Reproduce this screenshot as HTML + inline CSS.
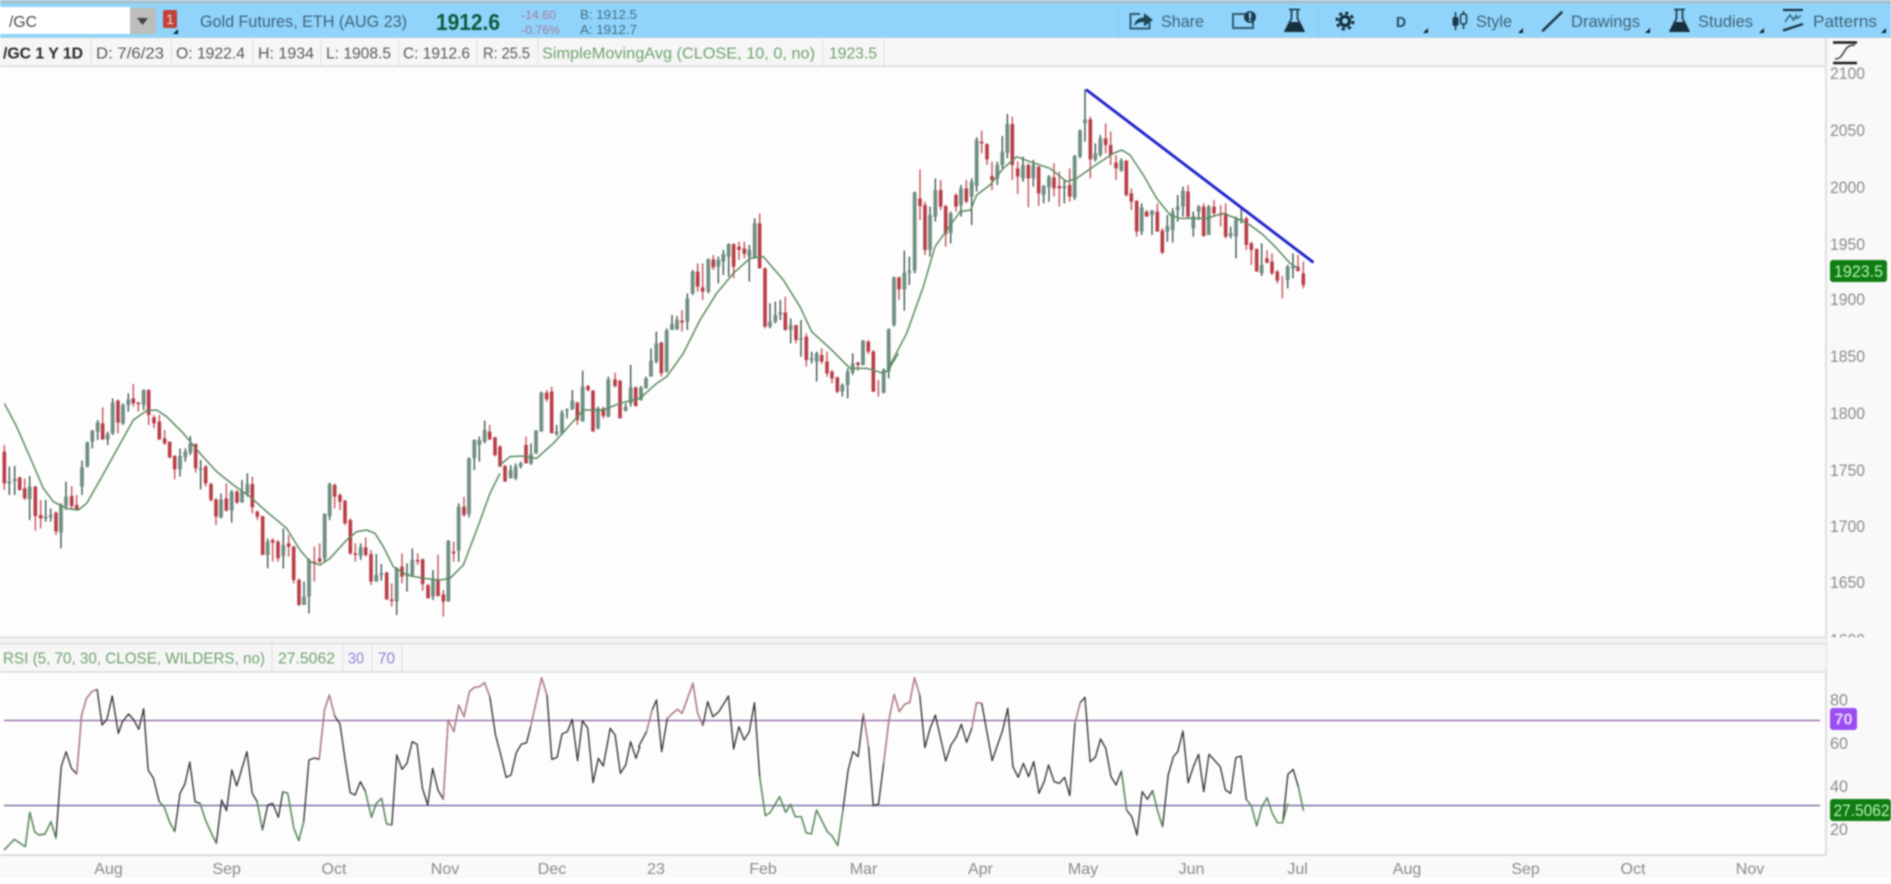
<!DOCTYPE html>
<html><head><meta charset="utf-8"><title>Gold Futures chart</title>
<style>
html,body{margin:0;padding:0;background:#fff;width:1891px;height:884px;overflow:hidden}
svg{display:block;filter:blur(.7px)}
svg *{vector-effect:non-scaling-stroke}
text{font-family:"Liberation Sans",sans-serif}
.rw{stroke:#c2464f;stroke-width:1.3;fill:none}
.rb{stroke:#b93c46;stroke-width:3.6;fill:none}
.gw{stroke:#2f4c44;stroke-width:1.3;fill:none}
.gb{stroke:#6f8f82;stroke-width:3.8;fill:none}
.ax{font-size:17px;fill:#8c8c8c}
.dt{font-size:16px;fill:#8a8a8a;text-anchor:middle}
.tb{font-size:17px;fill:#3f6478}
.r2{font-size:16px;fill:#5a5a5a}
.gt{font-size:16px;fill:#6fa36f}
.ln{fill:none;stroke:#3a3a3a;stroke-width:1.4;stroke-linejoin:round}
.lr{fill:none;stroke:#b97f86;stroke-width:1.4;stroke-linejoin:round}
.lg{fill:none;stroke:#5d915d;stroke-width:1.4;stroke-linejoin:round}
.sma{fill:none;stroke:#5a8a5e;stroke-width:1.5;stroke-linejoin:round}
</style></head><body>
<svg width="1891" height="884" viewBox="0 0 1891 884" xmlns="http://www.w3.org/2000/svg">
<rect width="1891" height="884" fill="#fff"/>
<!-- toolbar -->
<rect y="3" width="1891" height="35" fill="#90d4fb"/>
<rect width="1891" height="4" fill="#a2c3d4"/>
<rect y="7" width="130" height="27" fill="#fff"/>
<text x="9" y="27" font-size="16" fill="#4a4a4a" textLength="28" lengthAdjust="spacingAndGlyphs">/GC</text>
<rect x="130" y="8" width="26" height="26" fill="#bdbdbd"/>
<path d="M137 18h11l-5.500 7z" fill="#444"/>
<rect x="163" y="10" width="14" height="18" rx="2" fill="#c4403a"/>
<text x="170" y="24" font-size="14" fill="#f5d5d0" text-anchor="middle">1</text>
<path d="M178 29v5h-5z" fill="#123"/>
<text x="200" y="27" class="tb" textLength="207" lengthAdjust="spacingAndGlyphs">Gold Futures, ETH (AUG 23)</text>
<text x="436" y="30" font-size="23" font-weight="bold" fill="#0f5a40" textLength="64" lengthAdjust="spacingAndGlyphs">1912.6</text>
<text x="521" y="19" font-size="12" fill="#a9789e" textLength="35" lengthAdjust="spacingAndGlyphs">-14.60</text>
<text x="521" y="34" font-size="12" fill="#a9789e" textLength="39" lengthAdjust="spacingAndGlyphs">-0.76%</text>
<text x="580" y="19" font-size="13" fill="#456f85" textLength="57" lengthAdjust="spacingAndGlyphs">B: 1912.5</text>
<text x="580" y="34" font-size="13" fill="#456f85" textLength="57" lengthAdjust="spacingAndGlyphs">A: 1912.7</text>
<path d="M1118 5V37M1342 5V37M1318 5V37" stroke="#84c7ec" stroke-width="1"/>
<!-- share -->
<path d="M1140 14h-9.500v14.500h19v-6" fill="none" stroke="#2d5a70" stroke-width="2"/>
<path d="M1134 26c1-6 5-8.500 10-8.500V13l9 7-9 6.500v-4.500c-4 0-7 1-10 4z" fill="#1f4558"/>
<text x="1161" y="27" class="tb" textLength="43" lengthAdjust="spacingAndGlyphs">Share</text>
<!-- calendar -->
<path d="M1245 14h-12v14h20v-8" fill="none" stroke="#2d5a70" stroke-width="2"/>
<circle cx="1250" cy="17" r="6" fill="#1d3d4e"/>
<rect x="1249" y="12.500" width="2" height="6" fill="#90d4fb"/><rect x="1249" y="19.500" width="2" height="1.800" fill="#90d4fb"/>
<!-- flask -->
<path d="M1289 9.500h11M1291.500 9.500v9l-6 12h18l-6-12v-9" fill="none" stroke="#24404f" stroke-width="1.800"/>
<path d="M1289.500 22h10l5.500 10h-21z" fill="#172f3c"/>
<!-- gear -->
<circle cx="1345" cy="21" r="4.500" fill="none" stroke="#14303e" stroke-width="3.200"/>
<circle cx="1345" cy="21" r="8" fill="none" stroke="#14303e" stroke-width="3" stroke-dasharray="3.140 3.140"/>
<text x="1396" y="27" font-size="15" font-weight="bold" fill="#244c60" textLength="10" lengthAdjust="spacingAndGlyphs">D</text>
<path d="M1428 28v5h-5z" fill="#123"/>
<!-- style -->
<path d="M1455.500 12v18" stroke="#1b3746" stroke-width="1.500"/><rect x="1452.500" y="17" width="6" height="9" rx="2" fill="#1b3746"/>
<path d="M1463.500 11v18" stroke="#1b3746" stroke-width="1.500"/><rect x="1460.500" y="14" width="6" height="10" rx="2" fill="#90d4fb" stroke="#1b3746" stroke-width="1.500"/>
<text x="1476" y="27" class="tb" textLength="36" lengthAdjust="spacingAndGlyphs">Style</text>
<path d="M1523 28v5h-5z" fill="#123"/>
<!-- drawings -->
<path d="M1543 30.500L1561.500 12.500" stroke="#1b3746" stroke-width="2.600" stroke-linecap="round"/>
<text x="1571" y="27" class="tb" textLength="69" lengthAdjust="spacingAndGlyphs">Drawings</text>
<path d="M1650 28v5h-5z" fill="#123"/>
<!-- studies -->
<path d="M1674 9.500h11M1676.500 9.500v9l-6 12h18l-6-12v-9" fill="none" stroke="#24404f" stroke-width="1.800"/>
<path d="M1674.500 22h10l5.500 10h-21z" fill="#172f3c"/>
<text x="1698" y="27" class="tb" textLength="55" lengthAdjust="spacingAndGlyphs">Studies</text>
<path d="M1764 28v5h-5z" fill="#123"/>
<!-- patterns -->
<path d="M1783 10h20" stroke="#1b3746" stroke-width="2.200"/>
<path d="M1785 22l5-7 3.500 5 2.500-4.500 1 3 4-3" fill="none" stroke="#2d5a70" stroke-width="1.400"/>
<path d="M1783 30.500l20-6.500" stroke="#1b3746" stroke-width="2.400"/>
<text x="1813" y="27" class="tb" textLength="64" lengthAdjust="spacingAndGlyphs">Patterns</text>
<path d="M1886 28v5h-5z" fill="#123"/>
<rect y="37" width="1891" height="1.500" fill="#a9cfe2"/>

<!-- main info row -->
<rect y="38" width="1891" height="846" fill="#f9f9f9"/>
<rect y="38" width="1826" height="29" fill="#f6f6f6"/>
<path d="M0 66.500H1826" stroke="#d6d6d6" stroke-width="1.500"/>
<path d="M91 39V66M171.500 39V66M253 39V66M321 39V66M399 39V66M477 39V66M538 39V66M823 39V66M884 39V66" stroke="#dcdcdc" stroke-width="1"/>
<text x="3" y="58.500" font-size="16" font-weight="bold" fill="#2a2a2a" textLength="80" lengthAdjust="spacingAndGlyphs">/GC 1 Y 1D</text>
<text x="96" y="58.500" class="r2" textLength="68" lengthAdjust="spacingAndGlyphs">D: 7/6/23</text>
<text x="176" y="58.500" class="r2" textLength="69" lengthAdjust="spacingAndGlyphs">O: 1922.4</text>
<text x="258" y="58.500" class="r2" textLength="56" lengthAdjust="spacingAndGlyphs">H: 1934</text>
<text x="326" y="58.500" class="r2" textLength="65" lengthAdjust="spacingAndGlyphs">L: 1908.5</text>
<text x="403" y="58.500" class="r2" textLength="67" lengthAdjust="spacingAndGlyphs">C: 1912.6</text>
<text x="483" y="58.500" class="r2" textLength="47" lengthAdjust="spacingAndGlyphs">R: 25.5</text>
<text x="542" y="58.500" class="gt" textLength="273" lengthAdjust="spacingAndGlyphs">SimpleMovingAvg (CLOSE, 10, 0, no)</text>
<text x="829" y="58.500" class="gt" textLength="48" lengthAdjust="spacingAndGlyphs">1923.5</text>

<!-- chart area -->
<rect y="67" width="1826" height="570" fill="#fdfdfd"/>
<path d="M1826 38V855" stroke="#d8d8d8" stroke-width="1.500"/>
<path d="M0 637.500H1826" stroke="#dcdcdc" stroke-width="1.500"/>

<!-- candles A -->
<g transform="translate(0,380) scale(.33333)">
<path class="rw" d="M13 195V330M59 290V332M74 295V360M106 318V452M122 360V445M168 395V465M215 318V390M230 345V390M308 82V180M354 58V160M400 12V80M415 65V95M446 28V135M462 105V145M478 105V180M494 150V195M509 185V235M524 225V298M587 190V278M617 255V320M633 308V365M648 355V435M679 310V395M711 330V372M757 290V400M772 392V420M788 408V525M818 475V545M834 480V545M866 465V530M881 498V610M897 595V678M943 500V605M959 490V550M1004 310V385M1020 340V390M1035 360V435M1051 415V525M1066 490V545M1097 472V530M1113 510V615M1160 575V660M1175 610V680M1206 520V610M1253 520V555M1268 535V632M1284 612V655M1314 525V650M1330 630V710M1361 485V545M1392 350V410M1469 135V180M1485 170V230"/>
<path class="rb" d="M13 215V310M59 292V330M74 325V355M106 320V408M122 405V415M168 398V455M215 348V378M230 375V388M308 130V178M354 62V128M400 55V70M415 68V72M446 30V105M462 112V130M478 125V178M494 175V190M509 185V232M524 228V268M587 192V265M617 260V310M633 312V360M648 358V410M679 355V392M711 335V368M757 312V382M772 395V410M788 408V525M818 480V488M834 485V535M866 490V500M881 500V600M897 600V675M943 545V550M959 535V545M1004 315V350M1020 345V365M1035 362V430M1051 420V520M1066 520V525M1097 502V525M1113 522V605M1160 578V658M1175 658V663M1206 560V590M1253 540V545M1268 538V612M1284 615V655M1314 600V648M1330 643V665M1361 515V520M1392 380V405M1469 155V178M1485 172V225"/>
<path class="gw" d="M28 260V345M44 258V345M89 288V420M137 360V425M152 385V425M183 370V505M198 305V390M246 242V345M262 185V262M277 150V205M293 120V180M323 155V195M338 55V165M369 70V135M385 40V95M431 28V90M540 205V290M556 205V245M571 168V225M602 240V328M663 340V415M695 330V428M726 300V368M742 280V350M803 475V565M850 445V565M912 605V675M927 535V700M974 400V545M989 308V420M1082 490V540M1129 522V605M1144 552V602M1190 562V705M1221 550V635M1237 505V590M1299 570V660M1345 480V665M1376 370V545M1407 232V412M1423 178V270M1438 170V245M1454 122V190"/>
<path class="gb" d="M28 305V310M44 297V303M89 320V358M137 410V416M152 405V412M183 375V458M198 350V378M246 262V320M262 188V260M277 152V185M293 128V155M323 162V178M338 68V160M369 75V130M385 58V75M431 30V75M540 228V268M556 215V232M571 190V218M602 265V270M663 358V412M695 335V392M726 335V368M742 312V342M803 485V525M850 495V528M912 650V675M927 540V650M974 402V535M989 312V408M1082 502V528M1129 585V605M1144 580V585M1190 565V665M1221 580V585M1237 540V585M1299 600V650M1345 483V665M1376 380V512M1407 235V402M1423 180V235M1438 180V195M1454 150V185"/>
</g>
<!-- candles B -->
<g transform="translate(500,180) scale(.33333)">
<path class="rw" d="M0 795V860M15 855V905M78 770V850M140 630V665M155 620V760M232 665V735M264 615V635M279 630V755M310 680V715M345 578V622M360 600V715M407 620V680M484 485V590M546 390V455M593 250V335M608 250V360M640 225V270M701 190V295M717 185V240M733 185V235M779 100V265M795 262V445M856 350V452M888 435V490M919 460V560M965 505V552M981 515V590M996 570V610M1012 590V640M1074 545V572M1105 480V522M1120 510V636M1135 600V650"/>
<path class="rb" d="M0 800V860M15 858V905M78 795V850M140 638V658M155 635V760M232 668V720M264 618V630M279 632V755M310 685V708M345 598V618M360 602V715M407 622V678M484 488V580M546 422V428M593 275V320M608 322V335M640 238V262M701 192V260M717 200V210M733 205V222M779 130V265M795 265V440M856 397V450M888 435V480M919 470V540M965 525V545M981 545V580M996 575V595M1012 592V635M1074 548V555M1105 485V515M1120 515V635"/>
<path class="gw" d="M32 855V895M47 850V900M62 845V865M93 790V855M108 750V822M124 635V755M170 735V768M186 690V765M201 685V715M217 630V690M248 572V725M294 680V748M325 590V712M377 670V695M392 555V680M423 618V662M438 590V625M453 505V590M469 455V550M500 445V578M516 405V450M531 408V450M562 340V450M578 270V345M625 235V340M655 230V310M670 210V285M686 190V290M748 195V305M764 115V235M810 370V445M826 365V430M841 360V420M872 415V490M903 420V530M935 515V550M950 515V605M1027 610V650M1043 565V655M1058 520V585M1089 480V556M1151 565V640"/>
<path class="gb" d="M32 870V895M47 860V895M62 850V860M93 822V850M108 752V820M124 638V755M170 755V762M186 698V760M201 688V692M217 662V688M248 620V725M294 685V745M325 598V710M377 680V692M392 622V670M423 622V660M438 595V625M453 542V590M469 490V545M500 452V575M516 432V450M531 420V448M562 355V425M578 275V340M625 238V335M655 240V260M670 222V245M686 192V230M748 210V230M764 130V232M810 425V440M826 405V425M841 397V403M872 435V450M903 475V480M935 535V540M950 520V545M1027 615V635M1043 575V615M1058 550V578M1089 482V555M1151 570V638"/>
</g>
<!-- candles C -->
<g transform="translate(880,100) scale(.33333)">
<path class="rw" d="M57 530V600M120 208V360M135 305V465M182 240V330M197 315V440M228 280V335M259 240V310M305 92V160M321 130V195M336 185V270M397 50V240M413 185V282M445 190V322M476 198V318M522 190V290M538 215V320M569 205V305M631 50V235M677 70V160M692 95V195M708 165V240M739 180V290M754 265V330M770 300V410M800 330V350M832 310V395M847 385V462"/>
<path class="rb" d="M57 532V568M120 295V318M135 315V450M182 270V320M197 318V402M228 285V320M259 265V305M305 125V130M321 132V178M336 228V240M397 72V195M413 205V230M445 195V235M476 200V280M522 232V265M538 258V265M569 255V290M631 58V178M677 115V135M692 135V165M708 188V205M739 182V285M754 280V305M770 303V395M800 335V350M832 335V395M847 392V458"/>
<path class="gw" d="M26 685V835M42 530V680M73 452V632M88 470V555M104 275V520M150 320V470M166 235V365M212 335V430M243 255V350M275 235V375M290 112V275M352 185V255M367 108V205M382 42V175M429 170V245M460 180V260M491 255V310M507 225V305M553 240V310M584 165V300M600 88V175M615 -32V125M646 130V185M661 105V170M724 175V215M785 310V405M816 330V405M862 345V425M878 325V428"/>
<path class="gb" d="M26 688V815M42 532V675M73 518V568M88 512V518M104 277V512M150 345V450M166 270V350M212 340V400M243 265V315M275 245V290M290 120V258M352 195V235M367 155V195M382 72V158M429 195V235M460 195V235M491 258V285M507 230V262M553 258V265M584 168V292M600 92V170M615 58V70M646 160V178M661 115V165M724 182V212M785 322V395M816 332V345M862 378V395M878 335V390"/>
</g>
<!-- candles D -->
<g transform="translate(1050,70) scale(.33333)">
<path class="rw" d="M414 345V445M461 400V500M492 390V440M512 405V470M527 400V505M589 440V540M604 515V585M620 535V605M651 540V580M666 550V615M682 600V640M697 618V685M744 555V605M760 575V655"/>
<path class="rb" d="M414 365V440M461 410V498M492 410V430M512 430V435M527 430V500M589 445V525M604 520V540M620 537V605M651 565V578M666 575V610M682 605V632M744 590V603M760 610V645"/>
<path class="gw" d="M383 375V455M399 350V440M430 425V500M446 405V450M476 405V495M542 470V505M558 440V565M574 415V460M635 520V618M713 585V655M729 550V625"/>
<path class="gb" d="M383 410V420M399 362V410M430 438V475M446 410V425M476 410V495M542 490V498M558 448V500M574 445V452M635 585V610M713 590V630M729 588V595"/>
</g>

<!-- SMA -->
<g transform="translate(0,380) scale(.33333)"><polyline class="sma" points="13,70 50,140 100,255 130,325 160,365 200,385 235,390 260,370 300,300 350,210 400,120 440,92 470,90 500,110 550,160 600,220 650,275 700,315 750,350 800,395 860,445 900,510 930,545 960,555 990,535 1040,480 1070,455 1100,450 1125,460 1150,500 1180,560 1220,585 1270,595 1320,600 1350,595 1390,555 1430,450 1470,340 1500,280"/></g>
<g transform="translate(500,180) scale(.33333)"><polyline class="sma" points="0,855 30,830 65,828 110,835 160,790 210,735 250,690 310,690 360,670 420,655 470,610 500,590 550,520 600,420 650,340 700,280 750,235 790,230 850,300 900,380 935,455 990,505 1050,565 1100,565 1150,580 1165,570 1195,520"/></g>
<g transform="translate(880,100) scale(.33333)"><polyline class="sma" points="25,805 80,700 130,560 165,440 190,405 240,335 272,330 290,285 330,255 370,205 410,170 450,185 510,205 560,245 590,235 640,200 700,160 725,150 750,165 790,225 830,295 870,345 900,355"/></g>
<g transform="translate(1050,70) scale(.33333)"><polyline class="sma" points="390,445 430,445 470,445 520,430 570,450 600,465 640,495 680,535 720,580 745,595"/></g>

<!-- trendline -->
<path d="M1086 89.500L1313.500 262.500" stroke="#2222cc" stroke-width="2.900" fill="none"/>

<!-- price axis -->
<text x="1830" y="79" class="ax" textLength="35" lengthAdjust="spacingAndGlyphs">2100</text>
<text x="1830" y="136" class="ax" textLength="35" lengthAdjust="spacingAndGlyphs">2050</text>
<text x="1830" y="193" class="ax" textLength="35" lengthAdjust="spacingAndGlyphs">2000</text>
<text x="1830" y="250" class="ax" textLength="35" lengthAdjust="spacingAndGlyphs">1950</text>
<text x="1830" y="305" class="ax" textLength="35" lengthAdjust="spacingAndGlyphs">1900</text>
<text x="1830" y="362" class="ax" textLength="35" lengthAdjust="spacingAndGlyphs">1850</text>
<text x="1830" y="419" class="ax" textLength="35" lengthAdjust="spacingAndGlyphs">1800</text>
<text x="1830" y="476" class="ax" textLength="35" lengthAdjust="spacingAndGlyphs">1750</text>
<text x="1830" y="532" class="ax" textLength="35" lengthAdjust="spacingAndGlyphs">1700</text>
<text x="1830" y="588" class="ax" textLength="35" lengthAdjust="spacingAndGlyphs">1650</text>
<rect x="1830" y="260" width="57" height="22" rx="3" fill="#0f7d12"/>
<text x="1834" y="277" font-size="17" fill="#b8f0b8" textLength="49" lengthAdjust="spacingAndGlyphs">1923.5</text>
<path d="M1833 42.500h24M1833 63h24" stroke="#1c1c1c" stroke-width="2.400"/>
<path d="M1835 59c4 0 6-2 9-7s5-7 11-7" fill="none" stroke="#333" stroke-width="1.400"/>

<!-- partly hidden 1600 label -->
<text x="1830" y="645.500" class="ax" textLength="35" lengthAdjust="spacingAndGlyphs">1600</text>
<rect x="1827" y="637.500" width="64" height="20" fill="#f9f9f9"/>

<!-- RSI panel -->
<rect y="638.500" width="1826" height="5" fill="#f3f3f3"/>
<rect y="643" width="1826" height="29" fill="#f6f6f6"/>
<path d="M0 643.500H1826M0 672H1826" stroke="#dadada" stroke-width="1.500"/>
<rect y="672.800" width="1825" height="182" fill="#fdfdfd"/>
<path d="M272 644V671M343 644V671M372 644V671M402 644V671" stroke="#dcdcdc" stroke-width="1"/>
<text x="3" y="663.500" class="gt" textLength="262" lengthAdjust="spacingAndGlyphs">RSI (5, 70, 30, CLOSE, WILDERS, no)</text>
<text x="278" y="663.500" class="gt" textLength="57" lengthAdjust="spacingAndGlyphs">27.5062</text>
<text x="348" y="663.500" font-size="16" fill="#8e7fd4" textLength="16" lengthAdjust="spacingAndGlyphs">30</text>
<text x="378" y="663.500" font-size="16" fill="#8e7fd4" textLength="17" lengthAdjust="spacingAndGlyphs">70</text>
<path d="M4 720.500H1820" stroke="#8a5fa8" stroke-width="1.300"/>
<path d="M4 805.500H1820" stroke="#5f5a98" stroke-width="1.300"/>

<g transform="translate(0,630) scale(.40816,.33333)">
<polyline class="ln" points="10,660 35,628 62,650 73,547 85,605 95,615 110,612 125,575 137,625 150,410 162,365 175,415 188,432 200,255 212,205 225,185 238,178 250,285 262,268 275,198 290,310 300,275 315,252 328,270 340,298 352,236 363,420 376,445 390,515 402,530 415,575 428,605 441,490 453,462 465,396 478,515 490,520 505,575 518,610 530,640 543,510 555,542 568,420 580,468 605,365 618,490 630,515 643,600 656,525 668,520 682,562 693,485 705,490 720,595 732,632 744,575 757,390 770,384 782,388 795,240 807,195 820,258 833,282 845,385 858,488 870,495 883,455 895,483 910,562 922,520 935,505 947,582 960,585 972,375 985,418 997,400 1010,335 1022,343 1035,475 1048,525 1060,415 1073,480 1086,508 1098,270 1112,305 1124,225 1137,260 1150,185 1162,172 1175,170 1187,158 1200,200 1214,315 1227,375 1240,442 1252,435 1265,368 1277,343 1290,338 1300,290 1327,143 1340,195 1352,388 1365,382 1377,312 1390,305 1402,268 1415,392 1427,272 1440,295 1453,458 1466,385 1478,408 1495,295 1507,315 1520,430 1533,405 1545,335 1558,385 1568,350"/>
<polyline class="lr" points="188,432 200,255 212,205 225,185 238,178"/>
<polyline class="lr" points="782,388 795,240 807,195 820,258"/>
<polyline class="lr" points="1086,508 1098,270 1112,305 1124,225 1137,260 1150,185 1162,172 1175,170 1187,158 1200,200"/>
<polyline class="lr" points="1300,290 1327,143 1340,195"/>
<polyline class="lg" points="10,660 35,628 62,650 73,547 85,605 95,615 110,612 125,575 137,625"/>
<polyline class="lg" points="390,515 402,530 415,575 428,605"/>
<polyline class="lg" points="490,520 505,575 518,610 530,640"/>
<polyline class="lg" points="630,515 643,600"/>
<polyline class="lg" points="693,485 705,490 720,595 732,632 744,575"/>
<polyline class="lg" points="895,483 910,562 922,520 935,505 947,582 960,585"/>
</g>
<g transform="translate(640,660) scale(.43367,.33333)">
<polyline class="ln" points="-4,262 15,215 28,150 38,120 50,275 63,175 75,160 87,148 97,160 122,70 133,160 145,197 156,125 168,170 182,155 204,108 216,267 228,200 240,240 252,215 264,128 276,350 289,467 300,458 322,410 336,457 347,433 358,470 372,470 383,518 395,522 407,450 432,515 443,528 456,557 468,450 480,330 491,275 503,290 515,162 527,260 538,437 550,432 562,310 574,180 586,103 598,155 610,133 622,127 633,53 645,105 657,263 669,205 681,165 705,303 717,255 729,232 741,193 753,247 765,205 776,128 788,130 812,302 836,212 848,145 860,320 872,352 884,310 896,350 908,305 920,400 932,365 942,315 955,365 967,370 979,352 991,407 1003,190 1015,128 1026,112 1038,305 1050,292 1062,237 1074,265 1086,350 1098,375 1110,333 1122,450 1134,470 1146,525 1158,395 1170,418 1182,392 1194,455 1205,500 1218,345 1230,290 1240,275 1252,213 1264,368 1276,320 1288,283 1300,395 1312,283 1324,300 1338,320 1350,390 1362,400 1374,293 1386,288 1398,418 1410,438 1422,498 1434,440 1446,413 1458,460 1470,488 1482,488 1494,343 1506,328 1518,380 1530,453"/>
<polyline class="lr" points="15,215 28,150"/>
<polyline class="lr" points="63,175 75,160 87,148 97,160 122,70 133,160 145,197"/>
<polyline class="lr" points="515,162 527,260"/>
<polyline class="lr" points="562,310 574,180 586,103 598,155 610,133 622,127 633,53 645,105"/>
<polyline class="lr" points="765,205 776,128 788,130"/>
<polyline class="lr" points="1003,190 1015,128"/>
<polyline class="lg" points="276,350 289,467 300,458 322,410 336,457 347,433 358,470 372,470 383,518 395,522 407,450 432,515 443,528 456,557 468,450"/>
<polyline class="lg" points="1110,333 1122,450"/>
<polyline class="lg" points="1182,392 1194,455 1205,500"/>
<polyline class="lg" points="1398,418 1410,438 1422,498 1434,440 1446,413 1458,460 1470,488 1482,488 1494,430"/>
<polyline class="lg" points="1518,380 1530,453"/>
</g>

<path d="M0 855H1826" stroke="#d4d4d4" stroke-width="1.500"/>
<!-- RSI axis -->
<text x="1830" y="705.500" class="ax" textLength="18" lengthAdjust="spacingAndGlyphs">80</text>
<text x="1830" y="749" class="ax" textLength="18" lengthAdjust="spacingAndGlyphs">60</text>
<text x="1830" y="792" class="ax" textLength="18" lengthAdjust="spacingAndGlyphs">40</text>
<text x="1830" y="835" class="ax" textLength="18" lengthAdjust="spacingAndGlyphs">20</text>
<rect x="1830" y="708" width="27" height="22" rx="3" fill="#9a4df2"/>
<text x="1834.500" y="724.500" font-size="16" font-weight="bold" fill="#e6d2ff" textLength="18" lengthAdjust="spacingAndGlyphs">70</text>
<rect x="1830" y="799" width="61" height="22" rx="3" fill="#0f7d12"/>
<text x="1833.500" y="816" font-size="17" fill="#b8f0b8" textLength="56" lengthAdjust="spacingAndGlyphs">27.5062</text>

<!-- date axis -->
<g>
<text x="108.500" y="874" class="dt">Aug</text><text x="226.700" y="874" class="dt">Sep</text><text x="334" y="874" class="dt">Oct</text><text x="445" y="874" class="dt">Nov</text><text x="552" y="874" class="dt">Dec</text><text x="656" y="874" class="dt">23</text><text x="763" y="874" class="dt">Feb</text><text x="863.500" y="874" class="dt">Mar</text><text x="980.500" y="874" class="dt">Apr</text><text x="1083" y="874" class="dt">May</text><text x="1191.500" y="874" class="dt">Jun</text><text x="1297.600" y="874" class="dt">Jul</text><text x="1407" y="874" class="dt">Aug</text><text x="1525.600" y="874" class="dt">Sep</text><text x="1633" y="874" class="dt">Oct</text><text x="1750" y="874" class="dt">Nov</text>
</g>
<rect y="878" width="1891" height="6" fill="#fff"/>
</svg>
</body></html>
